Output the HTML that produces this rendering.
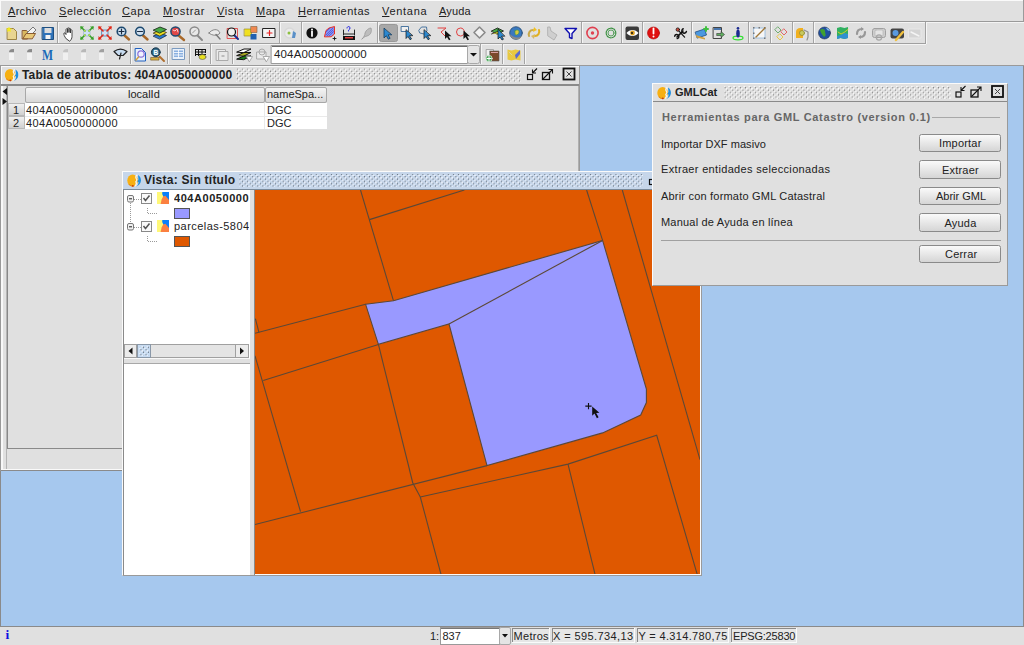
<!DOCTYPE html>
<html><head><meta charset="utf-8">
<style>
*{margin:0;padding:0;box-sizing:border-box}
html,body{width:1024px;height:645px;overflow:hidden}
body{position:relative;background:#e0e0e0;font-family:"Liberation Sans",sans-serif;font-size:11px;color:#222}
.a{position:absolute}
.t{position:absolute;white-space:nowrap;line-height:11px;font-size:11px}
.b{font-weight:bold}
</style></head><body>

<svg width="0" height="0" style="position:absolute">
<defs>
<pattern id="bumps" x="0" y="0" width="5.08" height="4.68" patternUnits="userSpaceOnUse">
<circle cx="0.1" cy="0.1" r="0.75" fill="#ffffff"/><circle cx="5.0" cy="0.1" r="0.75" fill="#ffffff"/><circle cx="0.1" cy="4.6" r="0.75" fill="#ffffff"/><circle cx="5.0" cy="4.6" r="0.75" fill="#ffffff"/>
<circle cx="2.54" cy="2.34" r="0.75" fill="#ffffff"/>
<circle cx="1.27" cy="1.17" r="0.6" fill="#7a7a7a"/><circle cx="3.81" cy="3.51" r="0.6" fill="#7a7a7a"/>
</pattern>
<pattern id="bumpsB" x="0" y="0" width="5.08" height="4.68" patternUnits="userSpaceOnUse">
<circle cx="0.1" cy="0.1" r="0.75" fill="#f4f8ff"/><circle cx="5.0" cy="0.1" r="0.75" fill="#f4f8ff"/><circle cx="0.1" cy="4.6" r="0.75" fill="#f4f8ff"/><circle cx="5.0" cy="4.6" r="0.75" fill="#f4f8ff"/>
<circle cx="2.54" cy="2.34" r="0.75" fill="#f4f8ff"/>
<circle cx="1.27" cy="1.17" r="0.6" fill="#5e6874"/><circle cx="3.81" cy="3.51" r="0.6" fill="#5e6874"/>
</pattern>


</defs></svg>
<!-- menu bar -->
<div class="a" style="left:0;top:0;width:1024px;height:1px;background:#fafafa"></div>
<div class="a" style="left:0;top:0;width:1px;height:21px;background:#fafafa"></div>
<div class="a" style="left:1023px;top:0;width:1px;height:22px;background:#9a9a9a"></div>
<div class="a" style="left:0;top:21px;width:1024px;height:1px;background:#9a9a9a"></div>
<div class="a" style="left:0;top:22px;width:1024px;height:1px;background:#f4f4f4"></div>

<!-- toolbar row1 bottom -->
<div class="a" style="left:0;top:43px;width:926px;height:1px;background:#a0a0a0"></div>
<div class="a" style="left:925px;top:22px;width:1px;height:22px;background:#a0a0a0"></div>
<div class="a" style="left:0;top:44px;width:926px;height:1px;background:#f4f4f4"></div>

<!-- toolbar row2 bottom / desktop -->
<div class="a" style="left:0;top:65px;width:1024px;height:1px;background:#9a9a9a"></div>
<div class="a" style="left:0;top:66px;width:1024px;height:560px;background:#a6c8ee"></div>
<div class="a" style="left:0;top:66px;width:1px;height:560px;background:#8a8a8a"></div>
<div class="a" style="left:1023px;top:66px;width:1px;height:560px;background:#8a8a8a"></div>
<div class="a" style="left:0;top:626px;width:1024px;height:1px;background:#8a8a8a"></div>

<!-- toolbar 1 icons -->
<svg class="a" style="left:0;top:0" width="1024" height="66" viewBox="0 0 1024 66">
<g stroke-linejoin="round" stroke-linecap="round">
<!-- separators tb1 -->
<g fill="#a4a4a4"><rect x="57" y="22" width="1" height="21"/><rect x="279" y="22" width="1" height="21"/><rect x="301" y="22" width="1" height="21"/><rect x="377" y="22" width="1" height="21"/><rect x="581" y="22" width="1" height="21"/><rect x="621" y="22" width="1" height="21"/><rect x="642" y="22" width="1" height="21"/><rect x="691" y="22" width="1" height="21"/><rect x="748" y="22" width="1" height="21"/><rect x="770" y="22" width="1" height="21"/><rect x="792" y="22" width="1" height="21"/><rect x="813" y="22" width="1" height="21"/></g>
<g fill="#f6f6f6"><rect x="58" y="22" width="1" height="21"/><rect x="280" y="22" width="1" height="21"/><rect x="302" y="22" width="1" height="21"/><rect x="378" y="22" width="1" height="21"/><rect x="582" y="22" width="1" height="21"/><rect x="622" y="22" width="1" height="21"/><rect x="643" y="22" width="1" height="21"/><rect x="692" y="22" width="1" height="21"/><rect x="749" y="22" width="1" height="21"/><rect x="771" y="22" width="1" height="21"/><rect x="793" y="22" width="1" height="21"/><rect x="814" y="22" width="1" height="21"/><rect x="926" y="22" width="1" height="22"/></g>
<!-- new doc -->
<path d="M7.5 28.5h6l3 3v8h-9z" fill="#e9d590" stroke="#9c8444"/>
<path d="M6 28l2 0.5 1-2 1 2 2 0-1.5 1.5 0.5 2-2-1-2 1 0.5-2z" fill="#f4ec20"/>
<!-- open folder -->
<path d="M22.5 30.5h4l1 1h0v7.5h-5z" fill="#d9b860" stroke="#8a5a30"/>
<path d="M27 33l6-6 3 3-5 5z" fill="#f2f2f2" stroke="#777"/>
<path d="M23 38.5l3-5h9.5l-3 5z" fill="#e8c878" stroke="#8a5a30"/>
<!-- save -->
<rect x="42.5" y="27.5" width="11" height="12" fill="#2f72b8" stroke="#1f4f80"/>
<rect x="44.5" y="28" width="7" height="5" fill="#dcdcdc"/>
<rect x="45.5" y="35" width="5" height="4" fill="#f4f4f4"/>
<!-- hand -->
<path d="M66 38.5c-1.5-2-2.5-4-2-5.5 1-0.5 1.5 0.5 2 1.5v-5c0-1 1.5-1 1.5 0v3-4c0-1 1.5-1 1.5 0v4-3.5c0-1 1.5-1 1.5 0v4-2.5c0-1 1.5-1 1.5 0v6c0 2-1 3.5-2 4.5z" fill="#fff" stroke="#333" stroke-width="0.9"/>
<!-- green extent -->
<rect x="84" y="30" width="6" height="6" fill="#cfe0f4" stroke="#8aa8c8" stroke-width="0.6"/>
<g stroke="#3aa02a" stroke-width="1.6"><path d="M81 27l4 4M93 27l-4 4M81 39l4-4M93 39l-4-4"/></g>
<g fill="#3aa02a"><path d="M80.5 26.5h3.5l-3.5 3.5zM93.5 26.5h-3.5l3.5 3.5zM80.5 39.5h3.5l-3.5-3.5zM93.5 39.5h-3.5l3.5-3.5z"/></g>
<g fill="#b8e040"><rect x="84" y="30" width="1.5" height="1.5"/><rect x="88.5" y="30" width="1.5" height="1.5"/><rect x="84" y="34.5" width="1.5" height="1.5"/><rect x="88.5" y="34.5" width="1.5" height="1.5"/></g>
<!-- red extent -->
<rect x="102" y="30" width="6" height="6" fill="#cfe0f4" stroke="#4a7aa8" stroke-width="0.8"/>
<g stroke="#e02818" stroke-width="1.6"><path d="M99 27l4 4M111 27l-4 4M99 39l4-4M111 39l-4-4"/></g>
<g fill="#e02818"><path d="M98.5 26.5h3.5l-3.5 3.5zM111.5 26.5h-3.5l3.5 3.5zM98.5 39.5h3.5l-3.5-3.5zM111.5 39.5h-3.5l3.5-3.5z"/></g>
<!-- zoom in -->
<path d="M124 35l5 4.5" stroke="#a86828" stroke-width="2.4"/>
<circle cx="121.5" cy="31.5" r="4.3" fill="#cfe0f0" stroke="#1e4a70" stroke-width="1.6"/>
<path d="M119 31.5h5M121.5 29v5" stroke="#1a2a40" stroke-width="1.2"/>
<!-- zoom out -->
<path d="M142.5 35l5 4.5" stroke="#a86828" stroke-width="2.4"/>
<circle cx="140" cy="31.5" r="4.3" fill="#cfe0f0" stroke="#1e4a70" stroke-width="1.6"/>
<path d="M137.5 31.5h5" stroke="#1a2a40" stroke-width="1.2"/>
<!-- layers -->
<path d="M153.5 36l6.5-3 6.5 2.5-6.5 3.5z" fill="#2a78d0" stroke="#102848" stroke-width="0.8"/>
<path d="M153.5 33l6.5-3 6.5 2.5-6.5 3.5z" fill="#f0e020" stroke="#403810" stroke-width="0.8"/>
<path d="M153.5 30l6.5-3 6.5 2.5-6.5 3.5z" fill="#48a848" stroke="#102010" stroke-width="0.8"/>
<!-- red zoom -->
<path d="M178 35l6 5" stroke="#a86828" stroke-width="2.4"/>
<circle cx="175.5" cy="31.5" r="4.6" fill="#e04848" stroke="#1e4a70" stroke-width="1.5"/>
<path d="M173 30l2 1 2-2 1 3" stroke="#f8d0d0" stroke-width="1" fill="none"/>
<!-- gray zoom -->
<path d="M197 35l5 5" stroke="#888" stroke-width="2"/>
<circle cx="194.5" cy="31.5" r="4.5" fill="#e8e8e8" stroke="#8a8a8a" stroke-width="1.5"/>
<path d="M192.5 33l3-3" stroke="#999" stroke-width="1"/>
<!-- gray eye zoom -->
<path d="M209 33c3-4 9-5 11 0-2 3-8 3-11 0z" fill="#eaeaea" stroke="#7a7a7a" stroke-width="0.9"/>
<path d="M216 34.5l4 4.5" stroke="#777" stroke-width="1.4"/>
<!-- red zoom frame -->
<rect x="227.5" y="28.5" width="10" height="10" fill="none" stroke="#e03030" stroke-width="0.8"/>
<path d="M234 35l4 4" stroke="#1a2a90" stroke-width="2"/>
<circle cx="231.5" cy="32" r="4" fill="#f0f0f0" stroke="#111" stroke-width="1.2"/>
<!-- squares -->
<rect x="244.5" y="29" width="7" height="7" fill="#f0e020" stroke="#908010" stroke-width="0.6"/>
<rect x="251" y="26.5" width="6" height="6" fill="#f08850" stroke="#806040" stroke-width="0.6"/>
<rect x="250.5" y="34" width="6" height="5.5" fill="#2060b0"/>
<!-- frame + -->
<rect x="263" y="28.5" width="12" height="9" fill="#f4f4f4" stroke="#222" stroke-width="1"/>
<path d="M267 33h5M269.5 30.5v5" stroke="#e82020" stroke-width="1.2"/>
<!-- gear -->
<circle cx="289.5" cy="33" r="5" fill="#eaeaea" stroke="#d8d8d8" stroke-width="1.5"/>
<circle cx="289" cy="33" r="1.5" fill="#8cc040"/>
<path d="M293 31l3 2-1 5-3 0z" fill="#5a90c8"/>
<!-- info -->
<circle cx="312" cy="33" r="5.6" fill="#111"/>
<path d="M312 31.5v4.5" stroke="#fff" stroke-width="1.8"/>
<circle cx="312" cy="29.5" r="1" fill="#fff"/>
<!-- hatched poly -->
<path d="M324.5 36.5l1.5-6 3-2.5 5.5-1.5v7.5l-3 2.5z" fill="#8890f0" stroke="#f02010" stroke-width="0.9"/><path d="M326 35l7-7M327 36l6-6M326 32l4-4M329 36l4.5-4.5" stroke="#3040d8" stroke-width="0.6"/>
<path d="M334.5 37v3M333 38.5h3" stroke="#111" stroke-width="0.9"/>
<!-- measure -->
<rect x="343" y="36" width="12" height="4" fill="#111"/>
<rect x="345" y="37" width="8" height="1.5" fill="#e84040"/>
<path d="M343.5 30v5M354.5 30v5M344 34h10" stroke="#111" stroke-width="0.9"/>
<path d="M347 28c0-2 3-2 3 0s-2 1-1.5 3" stroke="#2020e0" stroke-width="1" fill="none"/>
<!-- gray leaf -->
<path d="M362 39c2-2 3-4 3-6 1-3 4-5 6-5 1 3 0 7-4 8-2 0.5-3 1-5 3z" fill="#bdbdbd" stroke="#999" stroke-width="0.8"/>
<!-- pressed button -->
<rect x="379.5" y="24.5" width="18" height="17" rx="2" fill="#a8a8a8" stroke="#989898"/>
<path d="M384 28.5l0 9.5 2.3-2.3 2 3.5 1.8-0.9-2-3.5 3.3 0z" fill="#2a88d0" stroke="#0e3a60" stroke-width="0.8"/>
<!-- rect select -->
<rect x="401.5" y="26.5" width="7" height="5" fill="#f0f0f0" stroke="#3a6a98" stroke-width="0.9"/>
<path d="M406 30l0 8.5 2-2 2 3.2 1.5-0.8-2-3.2 3 0z" fill="#2a88d0" stroke="#111" stroke-width="0.7"/>
<!-- poly select -->
<path d="M419 30l2.5-3h5l0.5 4-3 3-4-1z" fill="none" stroke="#3a6a98" stroke-width="0.9"/>
<path d="M424 30l0 8.5 2-2 2 3.2 1.5-0.8-2-3.2 3 0z" fill="#2a88d0" stroke="#111" stroke-width="0.7"/>
<!-- red line select -->
<path d="M438 28h8l-5 4 5 5" fill="none" stroke="#e04040" stroke-width="1"/>
<path d="M445 30.5l0 8.5 2-2 2 3.2 1.5-0.8-2-3.2 3 0z" fill="#111"/>
<!-- red circle select -->
<circle cx="460.5" cy="32" r="4" fill="none" stroke="#e04040" stroke-width="1"/>
<path d="M463.5 30.5l0 8.5 2-2 2 3.2 1.5-0.8-2-3.2 3 0z" fill="#111"/>
<!-- gray diamond -->
<path d="M479.5 27l5.5 5.5-5.5 5.5-5.5-5.5z" fill="#f2f2f2" stroke="#8a8a8a" stroke-width="1.6"/>
<!-- layers arrow -->
<path d="M491.5 31l6-3 6 3-6 3z" fill="#48a848" stroke="#111" stroke-width="0.8"/>
<path d="M491.5 34l6-2.5 3 1.5" fill="#f0e020" stroke="#222" stroke-width="0.8"/>
<path d="M498 29.5l0 9.5 2-2 2 3 1.5-0.8-2-3 3 0z" fill="#2a88d0" stroke="#111" stroke-width="0.7"/>
<!-- globe -->
<circle cx="516" cy="33" r="6.3" fill="#3a78c0" stroke="#24486c" stroke-width="0.8"/>
<path d="M510 34c2 3 8 5 11 2 0 3-3 3.5-5 3.3-3 0-5.5-2-6-5.3z" fill="#8a8a8a"/>
<path d="M515 31c2-2 4-1 4 1s-2 3-3 3-1-2-1-4z" fill="#d8c840" stroke="#40a040" stroke-width="0.6"/>
<!-- gold arrows -->
<path d="M529 36c-1-3 1-6 4-6" stroke="#c8a848" stroke-width="2" fill="none"/>
<path d="M539 30c1 3-1 6-4 6" stroke="#e0b020" stroke-width="2" fill="none"/>
<path d="M534 27l3 3-4 2z" fill="#f0c020"/><path d="M534 39l-3-3 4-2z" fill="#d8b860"/>
<!-- gray brush -->
<path d="M548 27l2 0 1 4 6 4-3 5-6-4z" fill="#cfcfcf" stroke="#aaa" stroke-width="0.8"/>
<!-- filter -->
<path d="M565 28.5h11.5l-4.5 5v5l-2.5-1v-4z" fill="#fff" stroke="#1010b0" stroke-width="1.4"/>
<!-- red target -->
<circle cx="592.5" cy="33" r="5.6" fill="none" stroke="#e04050" stroke-width="1.6"/>
<circle cx="592.5" cy="33" r="1.7" fill="#e04050"/>
<!-- green gear -->
<circle cx="611" cy="33" r="4.8" fill="none" stroke="#3a9040" stroke-width="1.2" stroke-dasharray="1.5 1"/>
<circle cx="611" cy="33" r="3" fill="none" stroke="#3a9040" stroke-width="0.8"/>
<!-- eye -->
<rect x="625.5" y="26.5" width="13.5" height="13.5" rx="2" fill="#3a3a3a"/>
<path d="M626.5 33c3-4 9-4 12 0-3 4-9 4-12 0z" fill="#fff"/>
<circle cx="632.5" cy="33" r="2.4" fill="#e0a020"/><circle cx="632" cy="33" r="1" fill="#111"/>
<!-- red ! -->
<circle cx="653.5" cy="33" r="6" fill="#e01010" stroke="#b00000" stroke-width="0.6"/>
<path d="M653.5 28.5v5" stroke="#fff" stroke-width="1.8"/><circle cx="653.5" cy="36.5" r="1" fill="#fff"/>
<!-- tool -->
<path d="M677 37l6-6" stroke="#111" stroke-width="1.6"/>
<path d="M683.2 28.8a2.3 2.3 0 1 0 3.2 2.6" stroke="#111" stroke-width="1.5" fill="none"/>
<path d="M677.3 38.6a2.1 2.1 0 1 0 -2.6 -2.4" stroke="#111" stroke-width="1.5" fill="none"/>
<path d="M679 31.2l5.6 6" stroke="#111" stroke-width="1.2"/>
<circle cx="677.8" cy="29.6" r="1.7" fill="#d04838" stroke="#111" stroke-width="0.8"/>
<!-- blue + green -->
<path d="M695.5 32l9-3 2 6-9 3z" fill="#4a98e0" stroke="#1a4a80" stroke-width="0.8"/>
<path d="M696 35l9 3v1.5l-8.5-2z" fill="#d0a040"/>
<path d="M704 29h4M706 27v4" stroke="#40c040" stroke-width="2"/>
<!-- doc arrow -->
<rect x="713.5" y="27.5" width="8" height="11" fill="#e0e0e0" stroke="#444"/>
<rect x="714" y="28" width="7" height="2" fill="#4a78b0"/>
<path d="M717 33.5h4l0-2 3.5 3-3.5 3 0-2h-4z" fill="#60b060" stroke="#333" stroke-width="0.6"/>
<!-- pin -->
<ellipse cx="738" cy="38" rx="5" ry="1.8" fill="none" stroke="#30e030" stroke-width="1.2"/>
<ellipse cx="738" cy="33.5" rx="1.8" ry="4" fill="#1a2a90"/><circle cx="738" cy="28.3" r="1.3" fill="#1a2a90"/>
<!-- frame pencil -->
<rect x="754" y="28" width="11" height="10" fill="#f6f6f6" stroke="#90b8e0" stroke-width="0.8"/>
<g fill="#777"><rect x="753" y="27" width="1.5" height="1.5"/><rect x="764" y="27" width="1.5" height="1.5"/><rect x="753" y="37.5" width="1.5" height="1.5"/><rect x="764" y="37.5" width="1.5" height="1.5"/><rect x="758.5" y="27" width="1.5" height="1.5"/><rect x="753" y="32.5" width="1.5" height="1.5"/></g>
<path d="M756 37l9-9" stroke="#a07838" stroke-width="1.4"/>
<!-- diamonds -->
<path d="M778 27l3 3-3 3-3-3z" fill="none" stroke="#55a055" stroke-width="0.8"/>
<path d="M784 29l3 3-3 3-3-3z" fill="none" stroke="#e04848" stroke-width="0.8"/>
<path d="M780 34l3 3-3 3-3-3z" fill="none" stroke="#e8c020" stroke-width="0.8"/>
<!-- yellow measure -->
<path d="M796 31.5c0-2 2-3.5 4-3.5h3v10h-7z" fill="#f0b020"/>
<circle cx="802" cy="33" r="2.5" fill="#c8c860" stroke="#808020" stroke-width="0.6"/>
<path d="M804 30l4 2v5l-1 3" stroke="#909090" stroke-width="1.2" fill="none"/>
<!-- globe 2 -->
<circle cx="824.5" cy="33" r="6" fill="#2050a0" stroke="#203050" stroke-width="0.6"/>
<path d="M820 30c2-2 5-1 5 1 0 3 2 4-1 6-1-2-3-3-4-7z" fill="#40a030"/>
<path d="M826 28c2 0 3 1 4 3-2 0-3-1-4-3z" fill="#80c0f0"/>
<!-- map -->
<path d="M837 28l3.5-1 4 1 3.5-1v11l-3.5 1-4-1-3.5 1z" fill="#30b060"/>
<path d="M837 36l4-1 3-2 4 1v4l-3.5 1-4-1-3.5 1z" fill="#3090d0"/>
<path d="M838 32l3 2 3-1.5 4-3" stroke="#e0d020" stroke-width="0.9" fill="none"/>
<!-- gray arrows -->
<path d="M857 34c0-3 2-5 5-5M865 32c0 3-2 5-5 5" stroke="#989898" stroke-width="2.2" fill="none"/><path d="M861 27l3 2-3 2zM861 39l-3-2 3-2z" fill="#989898"/>
<!-- gray camera -->
<rect x="872.5" y="28.5" width="13" height="9" rx="2" fill="#cdcdcd" stroke="#a0a0a0"/>
<rect x="875" y="30" width="8" height="6" rx="1" fill="#e4e4e4" stroke="#b0b0b0" stroke-width="0.6"/>
<circle cx="879" cy="37.5" r="2.6" fill="none" stroke="#a8a8a8" stroke-width="1.2"/>
<!-- camera pencil -->
<rect x="890.5" y="28.5" width="13.5" height="10" rx="2" fill="#444"/>
<circle cx="895.5" cy="33" r="3" fill="#5a9ae0"/>
<path d="M896 40l7-8" stroke="#f0c040" stroke-width="2.4"/>
<!-- gray light -->
<rect x="909" y="29" width="12" height="9" fill="#d4d4d4" stroke="#e8e8e8"/>
<path d="M911 32l8 4" stroke="#f4f4f4" stroke-width="1.4"/>
</g>
</svg>

<!-- toolbar 2 -->
<svg class="a" style="left:0;top:0" width="1024" height="66" viewBox="0 0 1024 66">
<g stroke-linejoin="round" stroke-linecap="round">
<g fill="#a4a4a4"><rect x="130" y="44" width="1" height="20"/><rect x="167" y="44" width="1" height="20"/><rect x="189" y="44" width="1" height="20"/><rect x="210" y="44" width="1" height="20"/><rect x="232" y="44" width="1" height="20"/><rect x="480" y="44" width="1" height="20"/><rect x="502" y="44" width="1" height="20"/><rect x="524" y="44" width="1" height="20"/></g>
<g fill="#f6f6f6"><rect x="131" y="44" width="1" height="20"/><rect x="168" y="44" width="1" height="20"/><rect x="190" y="44" width="1" height="20"/><rect x="211" y="44" width="1" height="20"/><rect x="233" y="44" width="1" height="20"/><rect x="481" y="44" width="1" height="20"/><rect x="503" y="44" width="1" height="20"/><rect x="525" y="44" width="1" height="20"/></g>
<!-- disabled pins -->
<g>
<path d="M9 52.5c0-2 1-3.5 4-3.5l1 0v3.5z" fill="#8a8a8a"/><rect x="9" y="52.5" width="5" height="7.5" fill="#f2f2f2"/>
<path d="M27 52.5c0-2 1-3.5 4-3.5l1 0v3.5z" fill="#8a8a8a"/><rect x="27" y="52.5" width="5" height="7.5" fill="#f2f2f2"/>
<path d="M63 52.5c0-2 1-3.5 4-3.5l1 0v3.5z" fill="#c4c4c4"/><rect x="63" y="52.5" width="5" height="7.5" fill="#f0f0f0"/>
<path d="M81 52.5c0-2 1-3.5 4-3.5l1 0v3.5z" fill="#b8b8b8"/><rect x="81" y="52.5" width="5" height="7.5" fill="#f0f0f0"/>
<path d="M99 52.5c0-2 1-3.5 4-3.5l1 0v3.5z" fill="#a0a0a0"/><rect x="99" y="52.5" width="5" height="7.5" fill="#f0f0f0"/>
</g>
<text x="42" y="60" font-family="Liberation Serif" font-weight="bold" font-size="15" fill="#1a6ab8" transform="translate(42 0) scale(0.78 1) translate(-42 0)">M</text>
<!-- wiper -->
<path d="M114 51.5c4-3 9-3 13 0l-4 4h-5z" fill="#c8dcf0" stroke="#222" stroke-width="1.2"/>
<path d="M121 53l-1.5 6" stroke="#222" stroke-width="1.2"/>
<!-- doc magnifier -->
<path d="M135.5 48.5h6l4 4v8.5h-10z" fill="#e8f0fa" stroke="#2060c0" stroke-width="1"/>
<circle cx="141" cy="54" r="3.2" fill="#f0f0ff" stroke="#8a70d8" stroke-width="1.2"/>
<path d="M138.5 57l-2.5 3" stroke="#d0a040" stroke-width="1.5"/>
<!-- B magnifier -->
<path d="M159.5 56.5l4.5 4.5" stroke="#b07030" stroke-width="2"/>
<rect x="151" y="57.5" width="8" height="2.6" fill="#d8b040" stroke="#705020" stroke-width="0.6"/>
<circle cx="155.8" cy="52.2" r="4.4" fill="#2c5c78" stroke="#1a3a50" stroke-width="1"/>
<circle cx="155.8" cy="52.2" r="2.9" fill="#4a88a8"/>
<text x="153.6" y="54.8" font-family="Liberation Sans" font-weight="bold" font-size="6.5" fill="#fff">B</text>
<!-- table -->
<rect x="172.5" y="48.5" width="12" height="11" fill="#e8f0fa" stroke="#7a9ac0" stroke-width="1"/>
<g fill="#8ab0e0"><rect x="174" y="50.5" width="9" height="1.5"/><rect x="174" y="53" width="9" height="1.5"/><rect x="174" y="55.5" width="9" height="1.5"/></g>
<rect x="178" y="50" width="0.8" height="8" fill="#fff"/>
<!-- grid yellow -->
<g fill="#111"><rect x="195" y="49" width="11" height="1"/><rect x="195" y="51.5" width="11" height="1"/><rect x="195" y="54" width="11" height="1"/><rect x="195" y="49" width="1" height="7"/><rect x="198" y="49" width="1" height="7"/><rect x="201.5" y="49" width="1" height="7"/><rect x="205" y="49" width="1" height="4"/></g>
<ellipse cx="202.5" cy="57" rx="3.5" ry="2.5" fill="#e8e020" stroke="#555" stroke-width="0.6"/>
<!-- gray doc -->
<rect x="216.5" y="49.5" width="9" height="11" fill="#ececec" stroke="#aaa"/>
<rect x="219" y="51.5" width="9" height="9" fill="#e8e8e8" stroke="#aaa"/>
<rect x="221.5" y="55" width="3" height="2" fill="#bbb"/>
<!-- layers green -->
<path d="M237 52l7-3 7 0-7 3.5z" fill="#fff" stroke="#111" stroke-width="1"/>
<path d="M237 55.5l7-3 7 0-7 3.5z" fill="#a8a820" stroke="#111" stroke-width="1"/>
<path d="M237 59l7-3 7 0-7 3.5z" fill="#1a7a1a" stroke="#111" stroke-width="1"/>
<path d="M246.5 56.5h6l-3 5z" fill="#fff" stroke="#999" stroke-width="0.8"/>
<!-- gray layers -->
<rect x="257" y="52" width="9" height="7" fill="#eaeaea" stroke="#aaa"/>
<circle cx="262" cy="52" r="3" fill="none" stroke="#aaa"/>
<path d="M263.5 56.5h6l-3 5z" fill="#fff" stroke="#999" stroke-width="0.8"/>
<!-- combo -->
<rect x="271.5" y="45.5" width="196" height="18" fill="#fff" stroke="#9a9a9a"/>
<rect x="272" y="46" width="195" height="1" fill="#6a6a6a"/>
<rect x="467.5" y="45.5" width="12" height="18" rx="2" fill="#e4e4e4" stroke="#a8a8a8"/>
<path d="M470 53h7l-3.5 3.5z" fill="#111"/>
<!-- add layer -->
<rect x="486.5" y="49.5" width="7" height="9" fill="#f0f0f0" stroke="#999" stroke-width="0.8"/>
<rect x="490" y="51" width="9" height="10" fill="#7a4a2a" stroke="#555" stroke-width="0.6"/>
<rect x="491" y="52" width="7" height="1" fill="#d8a0a0"/>
<circle cx="489" cy="58.5" r="3.2" fill="#40a050" stroke="#fff" stroke-width="0.6"/>
<path d="M487 58.5h4M489 56.5v4" stroke="#fff" stroke-width="1"/>
<!-- map yellow -->
<path d="M507.5 49.5l4 1 4-1 5 1v10l-5-1-4 1-4-1z" fill="#e8c840"/>
<path d="M515 55l5-5v4l-4 5z" fill="#5a6ad0"/>
<path d="M509 52l3 3" stroke="#d8d8a0" stroke-width="1"/>
</g>
</svg>
<!-- menu text -->
<div class="t" style="left:8px;top:6px;letter-spacing:0.3px"><u>A</u>rchivo</div>
<div class="t" style="left:59px;top:6px;letter-spacing:0.55px"><u>S</u>elección</div>
<div class="t" style="left:122px;top:6px;letter-spacing:0.6px"><u>C</u>apa</div>
<div class="t" style="left:163px;top:6px;letter-spacing:0.7px"><u>M</u>ostrar</div>
<div class="t" style="left:217px;top:6px;letter-spacing:0.6px"><u>V</u>ista</div>
<div class="t" style="left:256px;top:6px;letter-spacing:0.45px"><u>M</u>apa</div>
<div class="t" style="left:298px;top:6px;letter-spacing:0.5px"><u>H</u>erramientas</div>
<div class="t" style="left:382px;top:6px;letter-spacing:0.7px"><u>V</u>entana</div>
<div class="t" style="left:439px;top:6px;letter-spacing:0.15px"><u>A</u>yuda</div>
<div class="t" style="left:274px;top:48.5px;font-size:11.5px;letter-spacing:0.15px">404A0050000000</div>

<!-- status bar -->
<svg class="a" style="left:0;top:626px" width="1024" height="19" viewBox="0 626 1024 19">
<text x="5.5" y="638.5" font-family="Liberation Serif" font-weight="bold" font-size="13.5" fill="#1010e0">i</text>
<rect x="440.5" y="627.5" width="59" height="17" fill="#fff" stroke="#9a9a9a"/>
<rect x="441" y="628" width="58" height="1" fill="#777"/>
<rect x="499.5" y="627.5" width="11" height="17" rx="1.5" fill="#e4e4e4" stroke="#a8a8a8"/>
<path d="M502 634h6l-3 3.5z" fill="#111"/>
<g fill="#e6e6e6"><rect x="512" y="628" width="38" height="15"/><rect x="552" y="628" width="83" height="15"/><rect x="637" y="628" width="92" height="15"/><rect x="731" y="628" width="66" height="15"/></g>
<g fill="#8a8a8a"><rect x="512" y="628" width="38" height="1"/><rect x="512" y="628" width="1" height="15"/><rect x="552" y="628" width="83" height="1"/><rect x="552" y="628" width="1" height="15"/><rect x="637" y="628" width="92" height="1"/><rect x="637" y="628" width="1" height="15"/><rect x="731" y="628" width="66" height="1"/><rect x="731" y="628" width="1" height="15"/></g>
<g fill="#fafafa"><rect x="512" y="642" width="38" height="1"/><rect x="549" y="628" width="1" height="15"/><rect x="552" y="642" width="83" height="1"/><rect x="634" y="628" width="1" height="15"/><rect x="637" y="642" width="92" height="1"/><rect x="728" y="628" width="1" height="15"/><rect x="731" y="642" width="66" height="1"/><rect x="796" y="628" width="1" height="15"/></g>
</svg>
<div class="t" style="left:430px;top:630.5px">1:</div>
<div class="t" style="left:442.5px;top:630.5px">837</div>
<div class="t" style="left:513.5px;top:630.5px;letter-spacing:0.3px">Metros</div>
<div class="t" style="left:553px;top:630.5px;letter-spacing:0.4px">X = 595.734,13</div>
<div class="t" style="left:638.5px;top:630.5px;letter-spacing:0.33px">Y = 4.314.780,75</div>
<div class="t" style="left:733px;top:630.5px;letter-spacing:-0.2px">EPSG:25830</div>

<!-- ===== Tabla window ===== -->
<div class="a" style="left:0;top:66px;width:580px;height:404px;background:#e0e0e0;border-right:1px solid #9a9a9a;border-bottom:1px solid #fafafa"></div>
<div class="a" style="left:0;top:470px;width:580px;height:1px;background:#8a8a8a"></div>
<div class="a" style="left:0;top:84px;width:579px;height:2px;background:#8a8a8a"></div>
<div class="a" style="left:7px;top:86px;width:572px;height:363px;border-left:1px solid #8a8a8a;border-bottom:1px solid #8a8a8a;border-right:1px solid #b0b0b0"></div>
<!-- table -->
<div class="a" style="left:8px;top:87px;width:17px;height:16px;background:#e0e0e0"></div>
<div class="a" style="left:25px;top:87px;width:240px;height:16px;background:linear-gradient(#f4f4f4,#d8d8d8);border:1px solid #a8a8a8;border-radius:2px"></div>
<div class="a" style="left:265px;top:87px;width:62px;height:16px;background:linear-gradient(#f4f4f4,#d8d8d8);border:1px solid #a8a8a8;border-radius:2px"></div>
<div class="a" style="left:25px;top:103px;width:302px;height:26px;background:#fff"></div>
<div class="a" style="left:25px;top:116px;width:302px;height:1px;background:#eaeaea"></div>
<div class="a" style="left:264px;top:103px;width:1px;height:26px;background:#eaeaea"></div>
<div class="a" style="left:8px;top:103px;width:17px;height:13px;background:linear-gradient(#f0f0f0,#d0d0d0);border:1px solid #b8b8b8"></div>
<div class="a" style="left:8px;top:116px;width:17px;height:13px;background:linear-gradient(#f0f0f0,#d0d0d0);border:1px solid #b8b8b8"></div>
<div class="t" style="left:128px;top:89px">localId</div>
<div class="t" style="left:267px;top:89px">nameSpa...</div>
<div class="t" style="left:13px;top:105px">1</div>
<div class="t" style="left:13px;top:118px">2</div>
<div class="t" style="left:26px;top:105px;letter-spacing:0.36px">404A0050000000</div>
<div class="t" style="left:26px;top:118px;letter-spacing:0.36px">404A0050000000</div>
<div class="t" style="left:267px;top:105px">DGC</div>
<div class="t" style="left:267px;top:118px">DGC</div>
<div class="t b" style="left:22px;top:69px;font-size:12px;line-height:12px;letter-spacing:0.15px">Tabla de atributos: 404A0050000000</div>

<!-- tabla decorations -->
<svg class="a" style="left:0;top:64px" width="580" height="410" viewBox="0 64 580 410">
<rect x="0" y="66" width="579" height="1" fill="#fafafa"/>
<rect x="1" y="66" width="1" height="18" fill="#fafafa"/>
<rect x="236" y="68.5" width="285" height="13.5" fill="url(#bumps)"/>
<svg x="4.5" y="68" width="14" height="14" viewBox="0 0 14 14">
<ellipse cx="5.6" cy="6.9" rx="5.3" ry="6" fill="#f7b012"/>
<path d="M1.8 10.5c1.2 1.6 3 2.3 5 2" stroke="#e88a18" stroke-width="1.2" fill="none"/>
<circle cx="5.8" cy="12.3" r="0.9" fill="#c83a10"/>
<path d="M10.2 1.2c-1.4 1.2-1.6 2.8-0.9 3.9 0.8 1 0.7 2.4-0.4 3.2 0.8 1.2 0.6 2.8-0.9 4.2" stroke="#f4f4f4" stroke-width="1.3" fill="none"/>
<path d="M11 1.6c2.3 1.4 3.2 3.6 2.9 6-0.3 2.4-1.9 4.4-4.7 5.6 1.5-1.3 2.4-3 2.3-4.8-0.6 0-1.2-0.3-1.1-0.8 0.9-0.7 1.1-1.5 1-2.4-0.1-1.2-0.3-2.5-0.4-3.6z" fill="#1f8fe0"/>
</svg>
<svg x="526" y="67" width="52" height="14" viewBox="0 0 52 14">
<g fill="none" stroke="#111">
<rect x="1.5" y="7.5" width="5" height="5" stroke-width="1.2"/>
<path d="M11 1.5l-4.5 4.5M6.5 2.5v3.5h3.5" stroke-width="1.1"/>
<rect x="16.5" y="5.5" width="7" height="7" stroke-width="1.3"/>
<path d="M17 12l9-9M22.5 2.5h4v4" stroke-width="1.1"/>
<rect x="37.5" y="1.5" width="11" height="11" stroke-width="1.8"/>
<path d="M40.5 4.5l5 5M45.5 4.5l-5 5" stroke-width="1" stroke="#444"/>
</g>
</svg>
<!-- splitter arrows -->
<rect x="1" y="86" width="2" height="383" fill="#f8f8f8"/><rect x="6" y="86" width="1" height="383" fill="#b4b4b4"/>
<path d="M2.5 91.5l4.5-3.5v7z" fill="#111"/>
<path d="M7 101.5l-4.5-3.5v7z" fill="#111"/>
</svg>
<div class="a" style="left:0;top:66px;width:1px;height:405px;background:#999"></div>
<div class="a" style="left:7px;top:86px;width:1px;height:363px;background:#888"></div>

<!-- ===== Vista window ===== -->
<div class="a" style="left:122px;top:171px;width:580px;height:405px;background:#e0e0e0;border-left:1px solid #fafafa;border-top:1px solid #fafafa;border-right:1px solid #9a9a9a;border-bottom:1px solid #9a9a9a"></div>
<div class="a" style="left:123px;top:172px;width:578px;height:17px;background:#c6d6ea"></div>
<div class="a" style="left:123px;top:189px;width:578px;height:1px;background:#7a8a9a"></div>
<div class="t b" style="left:144px;top:174px;font-size:12px;line-height:12px;letter-spacing:0.25px">Vista: Sin título</div>
<!-- toc -->
<div class="a" style="left:123px;top:190px;width:127px;height:385px;background:#fff;border-left:1px solid #8a8a8a"></div>
<div class="a" style="left:124px;top:358px;width:126px;height:6px;background:#e0e0e0;border-bottom:1px solid #a8a8a8;border-top:1px solid #f8f8f8"></div>
<div class="a" style="left:124px;top:344px;width:125px;height:14px;background:#e4e4e4;border:1px solid #a0a0a0"></div>
<div class="a" style="left:250px;top:190px;width:5px;height:385px;background:#e0e0e0;border-right:1px solid #8a8a8a"></div>
<div class="t b" style="left:174px;top:193px;width:75px;overflow:hidden;letter-spacing:0.55px">404A0050000000</div>
<div class="t" style="left:174px;top:221px;width:75px;overflow:hidden;letter-spacing:0.45px">parcelas-5804171</div>
<div class="a" style="left:174px;top:208px;width:16px;height:11px;background:#9999ff;border:1px solid #555"></div>
<div class="a" style="left:174px;top:236px;width:16px;height:11px;background:#df5800;border:1px solid #555"></div>

<!-- map -->
<svg class="a" style="left:255px;top:190px" width="445" height="384" viewBox="255 190 445 384">
<rect x="255" y="190" width="445" height="384" fill="#df5800"/>
<polygon fill="#9999ff" stroke="#5c4836" stroke-width="1.1" points="365.6,304.3 393.5,300.8 602.6,240.4 646.4,389 646.4,402.6 640.7,415 602.6,432.9 487,465.6 449,324 378.4,344.4"/>
<g stroke="#5c4836" stroke-width="1.1" fill="none">
<line x1="360.5" y1="190" x2="393.5" y2="300.8"/>
<line x1="369.4" y1="219.6" x2="464.4" y2="190"/>
<line x1="365.6" y1="304.3" x2="255" y2="333.3"/>
<line x1="255.4" y1="318.6" x2="259" y2="332.6"/>
<line x1="586.6" y1="190" x2="602.6" y2="240.4"/>
<line x1="602.6" y1="240.4" x2="449" y2="324"/>
<line x1="622.3" y1="190" x2="700" y2="459.7"/>
<line x1="378.4" y1="344.4" x2="263.2" y2="380.6"/>
<line x1="255" y1="355.8" x2="300.5" y2="511.6"/>
<line x1="378.4" y1="344.4" x2="412.8" y2="483"/>
<line x1="255" y1="524.5" x2="487" y2="465.6"/>
<line x1="412.8" y1="483" x2="420.3" y2="497"/>
<polyline points="420.3,497 568,464.1 656.7,435.3 697.4,575"/>
<line x1="568" y1="464.1" x2="595.2" y2="575"/>
<line x1="420.3" y1="497" x2="441.2" y2="575"/>
</g>
</svg>
<div class="a" style="left:700px;top:190px;width:1px;height:385px;background:#fafafa"></div>
<div class="a" style="left:255px;top:574px;width:446px;height:1px;background:#fafafa"></div>

<!-- vista decorations -->
<svg class="a" style="left:122px;top:171px" width="580" height="200" viewBox="122 171 580 200">
<rect x="239" y="174" width="404" height="13" fill="url(#bumpsB)"/>
<svg x="127" y="173.5" width="14" height="14" viewBox="0 0 14 14">
<ellipse cx="5.6" cy="6.9" rx="5.3" ry="6" fill="#f7b012"/>
<path d="M1.8 10.5c1.2 1.6 3 2.3 5 2" stroke="#e88a18" stroke-width="1.2" fill="none"/>
<circle cx="5.8" cy="12.3" r="0.9" fill="#c83a10"/>
<path d="M10.2 1.2c-1.4 1.2-1.6 2.8-0.9 3.9 0.8 1 0.7 2.4-0.4 3.2 0.8 1.2 0.6 2.8-0.9 4.2" stroke="#f4f4f4" stroke-width="1.3" fill="none"/>
<path d="M11 1.6c2.3 1.4 3.2 3.6 2.9 6-0.3 2.4-1.9 4.4-4.7 5.6 1.5-1.3 2.4-3 2.3-4.8-0.6 0-1.2-0.3-1.1-0.8 0.9-0.7 1.1-1.5 1-2.4-0.1-1.2-0.3-2.5-0.4-3.6z" fill="#1f8fe0"/>
</svg>
<svg x="648" y="172" width="52" height="14" viewBox="0 0 52 14">
<g fill="none" stroke="#111">
<rect x="1.5" y="7.5" width="5" height="5" stroke-width="1.2"/>
<path d="M11 1.5l-4.5 4.5M6.5 2.5v3.5h3.5" stroke-width="1.1"/>
<rect x="16.5" y="5.5" width="7" height="7" stroke-width="1.3"/>
<path d="M17 12l9-9M22.5 2.5h4v4" stroke-width="1.1"/>
<rect x="37.5" y="1.5" width="11" height="11" stroke-width="1.8"/>
<path d="M40.5 4.5l5 5M45.5 4.5l-5 5" stroke-width="1" stroke="#444"/>
</g>
</svg>
<!-- tree -->
<g stroke="#9a9a9a" stroke-width="1" stroke-dasharray="1 1" fill="none">
<path d="M130.5 203v20M134 199.5h7M134 227.5h7"/>
<path d="M147.5 208v5M148 213.5h9M147.5 236v5M148 241.5h9"/>
</g>
<g>
<rect x="127.5" y="195.5" width="6" height="6.5" rx="1.5" fill="#f0f0f0" stroke="#777"/>
<path d="M129 198.8h3" stroke="#222" stroke-width="1"/>
<rect x="127.5" y="223.5" width="6" height="6.5" rx="1.5" fill="#f0f0f0" stroke="#777"/>
<path d="M129 226.8h3" stroke="#222" stroke-width="1"/>
<rect x="141.5" y="193.5" width="10" height="10" fill="#fafafa" stroke="#888"/>
<path d="M143.5 198l2 2.5 4-5" stroke="#555" stroke-width="1.5" fill="none"/>
<rect x="141.5" y="221.5" width="10" height="10" fill="#fafafa" stroke="#888"/>
<path d="M143.5 226l2 2.5 4-5" stroke="#555" stroke-width="1.5" fill="none"/>
</g>
<g>
<rect x="157" y="192" width="12" height="12" fill="#fff878"/>
<path d="M162.3 192h6.7v11l-3-3.5-2.5-2.5-1.3-3z" fill="#0a80f8"/>
<path d="M160.6 204l1-4.5 1.6-3 2.2-0.8 3.6 4.4v3.9z" fill="#fb8040"/>
<rect x="157" y="220" width="12" height="12" fill="#fff878"/>
<path d="M162.3 220h6.7v11l-3-3.5-2.5-2.5-1.3-3z" fill="#0a80f8"/>
<path d="M160.6 232l1-4.5 1.6-3 2.2-0.8 3.6 4.4v3.9z" fill="#fb8040"/>
</g>
<!-- scrollbar -->
<rect x="124.5" y="344.5" width="12" height="13" fill="#ececec" stroke="#a0a0a0"/>
<path d="M128.5 351l4-3.5v7z" fill="#111"/>
<rect x="137.5" y="344.5" width="13" height="13" fill="#c8dcf2" stroke="#8a98a8"/>
<rect x="139" y="346" width="10" height="10" fill="url(#bumpsB)"/>
<rect x="235.5" y="344.5" width="13" height="13" fill="#ececec" stroke="#a0a0a0"/>
<path d="M244 351l-4-3.5v7z" fill="#111"/>
</svg>

<!-- ===== GMLCat window ===== -->
<div class="a" style="left:652px;top:83px;width:356px;height:203px;background:#e0e0e0;border-left:1px solid #fafafa;border-top:1px solid #fafafa;border-right:1px solid #9a9a9a;border-bottom:1px solid #9a9a9a"></div>
<div class="a" style="left:653px;top:101px;width:354px;height:1px;background:#8a8a8a"></div>
<div class="t b" style="left:675px;top:87px">GMLCat</div>
<div class="t b" style="left:662px;top:112px;color:#666;letter-spacing:0.67px">Herramientas para GML Catastro (version 0.1)</div>
<div class="a" style="left:932px;top:117px;width:68px;height:1px;background:#a8a8a8"></div>
<div class="t" style="left:661px;top:139px;letter-spacing:0.05px">Importar DXF masivo</div>
<div class="t" style="left:661px;top:164px;letter-spacing:0.33px">Extraer entidades seleccionadas</div>
<div class="t" style="left:661px;top:191px;letter-spacing:0.2px">Abrir con formato GML Catastral</div>
<div class="t" style="left:661px;top:217px;letter-spacing:0.2px">Manual de Ayuda en línea</div>
<div class="a" style="left:661px;top:240px;width:340px;height:1px;background:#a0a0a0"></div>

<!-- gml decorations -->
<svg class="a" style="left:652px;top:83px" width="356" height="203" viewBox="652 83 356 203">
<rect x="724" y="86" width="227" height="13" fill="url(#bumps)"/>
<svg x="657" y="86" width="14" height="14" viewBox="0 0 14 14">
<ellipse cx="5.6" cy="6.9" rx="5.3" ry="6" fill="#f7b012"/>
<path d="M1.8 10.5c1.2 1.6 3 2.3 5 2" stroke="#e88a18" stroke-width="1.2" fill="none"/>
<circle cx="5.8" cy="12.3" r="0.9" fill="#c83a10"/>
<path d="M10.2 1.2c-1.4 1.2-1.6 2.8-0.9 3.9 0.8 1 0.7 2.4-0.4 3.2 0.8 1.2 0.6 2.8-0.9 4.2" stroke="#f4f4f4" stroke-width="1.3" fill="none"/>
<path d="M11 1.6c2.3 1.4 3.2 3.6 2.9 6-0.3 2.4-1.9 4.4-4.7 5.6 1.5-1.3 2.4-3 2.3-4.8-0.6 0-1.2-0.3-1.1-0.8 0.9-0.7 1.1-1.5 1-2.4-0.1-1.2-0.3-2.5-0.4-3.6z" fill="#1f8fe0"/>
</svg>
<svg x="954.5" y="84.5" width="52" height="14" viewBox="0 0 52 14">
<g fill="none" stroke="#111">
<rect x="1.5" y="7.5" width="5" height="5" stroke-width="1.2"/>
<path d="M11 1.5l-4.5 4.5M6.5 2.5v3.5h3.5" stroke-width="1.1"/>
<rect x="16.5" y="5.5" width="7" height="7" stroke-width="1.3"/>
<path d="M17 12l9-9M22.5 2.5h4v4" stroke-width="1.1"/>
<rect x="37.5" y="1.5" width="11" height="11" stroke-width="1.8"/>
<path d="M40.5 4.5l5 5M45.5 4.5l-5 5" stroke-width="1" stroke="#444"/>
</g>
</svg>
<defs><linearGradient id="btng" x1="0" y1="0" x2="0" y2="1"><stop offset="0" stop-color="#fbfbfb"/><stop offset="1" stop-color="#d4d4d4"/></linearGradient></defs>
<g fill="url(#btng)" stroke="#8a8a8a">
<rect x="919.5" y="134.5" width="81" height="17" rx="2"/>
<rect x="919.5" y="160.5" width="81" height="18" rx="2"/>
<rect x="919.5" y="187.5" width="81" height="17" rx="2"/>
<rect x="919.5" y="213.5" width="81" height="18" rx="2"/>
<rect x="919.5" y="245.5" width="81" height="17" rx="2"/>
</g>
</svg>
<div class="t" style="left:939px;top:138px;letter-spacing:0.2px">Importar</div>
<div class="t" style="left:942px;top:164.5px;letter-spacing:0.2px">Extraer</div>
<div class="t" style="left:936px;top:191px;letter-spacing:0px">Abrir GML</div>
<div class="t" style="left:944.5px;top:217.5px;letter-spacing:0.2px">Ayuda</div>
<div class="t" style="left:945px;top:249px;letter-spacing:0.2px">Cerrar</div>
<!-- cursor -->
<svg class="a" style="left:582px;top:400px" width="20" height="20" viewBox="582 400 20 20">
<path d="M588.5 403v6.2M585.3 406.1h6.3" stroke="#111" stroke-width="1.1"/>
<path d="M592.2 406.4v9.4l2.3-2.2 2.4 4.6 1.7-0.9-2.4-4.4 3.2-0.2z" fill="#111"/>
</svg>

</body></html>
